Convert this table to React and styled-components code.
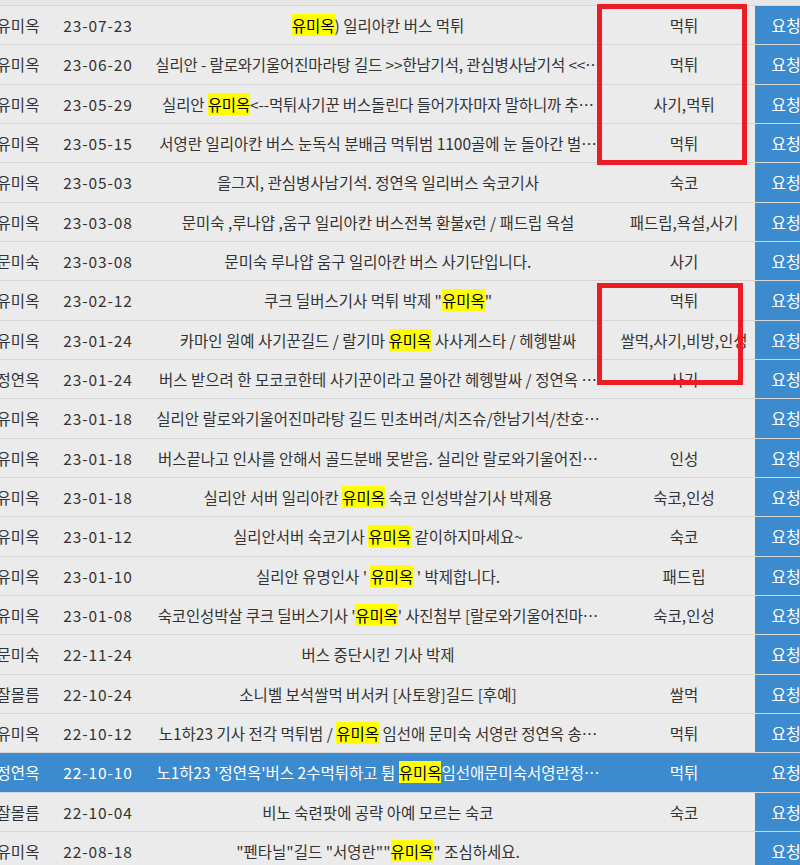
import React from 'react';
import styled, { createGlobalStyle } from 'styled-components';

const GlobalStyle = createGlobalStyle`
  html, body {
    margin: 0;
    padding: 0;
    background: #ebebeb;
    overflow: hidden;
  }
  body {
    font-family: "Noto Sans CJK KR", "Noto Sans", sans-serif;
  }
`;

const Page = styled.div`
  position: relative;
  width: 800px;
  height: 865px;
  overflow: hidden;
  background: #ebebeb;
`;

const Table = styled.div`
  display: flex;
  flex-direction: column;
  margin-left: -12px;
  padding-top: 5px;
  background: #e7e7e7;
`;

const Row = styled.div`
  display: grid;
  grid-template-columns: 60px 100px 460px 147px 60px;
  height: 38.33px;
  border-top: 1px solid #d7d7d7;
  background: ${(p) => (p.selected ? '#3d8bcf' : '#ebebeb')};
  color: ${(p) => (p.selected ? '#ffffff' : '#333333')};
  font-size: 15.5px;
`;

const Cell = styled.div`
  display: flex;
  align-items: center;
  justify-content: center;
  white-space: nowrap;
  overflow: hidden;
  letter-spacing: ${(p) => (p.wide ? '0.9px' : '0')};
`;

const TitleCell = styled.div`
  padding: 0 7px;
  line-height: 38.33px;
  text-align: center;
  white-space: nowrap;
  overflow: hidden;
  text-overflow: ellipsis;
  letter-spacing: ${(p) => (p.tight ? '-0.15px' : '0')};
`;

const TagCell = styled.div`
  padding-left: 5px;
  line-height: 38.33px;
  text-align: center;
  white-space: nowrap;
`;

const ReqButton = styled.div`
  display: flex;
  align-items: center;
  justify-content: center;
  padding-left: 2px;
  background: #3d8bcf;
  color: #ffffff;
  font-size: 16px;
  cursor: pointer;
`;

const Mark = styled.span`
  background: #ffff00;
  color: #000000;
`;

const RedBox = styled.div`
  position: absolute;
  left: ${(p) => p.x}px;
  top: ${(p) => p.y}px;
  width: ${(p) => p.w}px;
  height: ${(p) => p.h}px;
  box-sizing: border-box;
  border: 5px solid #ed1c24;
  pointer-events: none;
`;

const M = '유미옥';

// titles that the board cuts off are kept as the board shows them
const rows = [
  { name: '유미옥', date: '23-07-23', title: [[M], ') 일리아칸 버스 먹튀'], tag: '먹튀' },
  { name: '유미옥', date: '23-06-20', title: ['실리안 - 랄로와기울어진마라탕 길드 >>한남기석, 관심병사남기석 <<…'], tag: '먹튀', tight: true },
  { name: '유미옥', date: '23-05-29', title: ['실리안 ', [M], '<--먹튀사기꾼 버스돌린다 들어가자마자 말하니까 추…'], tag: '사기,먹튀', tight: true },
  { name: '유미옥', date: '23-05-15', title: ['서영란 일리아칸 버스 눈독식 분배금 먹튀범 1100골에 눈 돌아간 벌…'], tag: '먹튀' },
  { name: '유미옥', date: '23-05-03', title: ['을그지, 관심병사남기석. 정연옥 일리버스 숙코기사'], tag: '숙코' },
  { name: '유미옥', date: '23-03-08', title: ['문미숙 ,루나얍 ,움구 일리아칸 버스전복 환불x런 / 패드립 욕설'], tag: '패드립,욕설,사기' },
  { name: '문미숙', date: '23-03-08', title: ['문미숙 루나얍 움구 일리아칸 버스 사기단입니다.'], tag: '사기' },
  { name: '유미옥', date: '23-02-12', title: ['쿠크 딜버스기사 먹튀 박제 "', [M], '"'], tag: '먹튀' },
  { name: '유미옥', date: '23-01-24', title: ['카마인 원예 사기꾼길드 / 랄기마 ', [M], ' 사사게스타 / 헤헹발싸'], tag: '쌀먹,사기,비방,인성' },
  { name: '정연옥', date: '23-01-24', title: ['버스 받으려 한 모코코한테 사기꾼이라고 몰아간 헤헹발싸 / 정연옥 …'], tag: '사기' },
  { name: '유미옥', date: '23-01-18', title: ['실리안 랄로와기울어진마라탕 길드 민초버려/치즈슈/한남기석/찬호…'], tag: '' },
  { name: '유미옥', date: '23-01-18', title: ['버스끝나고 인사를 안해서 골드분배 못받음. 실리안 랄로와기울어진…'], tag: '인성' },
  { name: '유미옥', date: '23-01-18', title: ['실리안 서버 일리아칸 ', [M], ' 숙코 인성박살기사 박제용'], tag: '숙코,인성' },
  { name: '유미옥', date: '23-01-12', title: ['실리안서버 숙코기사 ', [M], ' 같이하지마세요~'], tag: '숙코' },
  { name: '유미옥', date: '23-01-10', title: ['실리안 유명인사 \' ', [M], ' \' 박제합니다.'], tag: '패드립' },
  { name: '유미옥', date: '23-01-08', title: ['숙코인성박살 쿠크 딜버스기사 \'', [M], '\' 사진첨부 [랄로와기울어진마…'], tag: '숙코,인성', tight: true },
  { name: '문미숙', date: '22-11-24', title: ['버스 중단시킨 기사 박제'], tag: '' },
  { name: '잘몰름', date: '22-10-24', title: ['소니벨 보석쌀먹 버서커 [사토왕]길드 [후예]'], tag: '쌀먹' },
  { name: '유미옥', date: '22-10-12', title: ['노1하23 기사 전각 먹튀범 / ', [M], ' 임선애 문미숙 서영란 정연옥 송…'], tag: '먹튀' },
  { name: '정연옥', date: '22-10-10', title: ['노1하23 \'정연옥\'버스 2수먹튀하고 튐 ', [M], '임선애문미숙서영란정…'], tag: '먹튀', selected: true },
  { name: '잘몰름', date: '22-10-04', title: ['비노 숙련팟에 공략 아예 모르는 숙코'], tag: '숙코' },
  { name: '유미옥', date: '22-08-18', title: ['"펜타닐"길드 "서영란""', [M], '" 조심하세요.'], tag: '' },
];

function renderTitle(parts) {
  return parts.map((p, i) =>
    Array.isArray(p) ? <Mark key={i}>{p[0]}</Mark> : <React.Fragment key={i}>{p}</React.Fragment>
  );
}

export default function App() {
  return (
    <Page>
      <GlobalStyle />
      <Table>
        {rows.map((r, i) => (
          <Row key={i} selected={r.selected}>
            <Cell>{r.name}</Cell>
            <Cell wide>{r.date}</Cell>
            <TitleCell tight={r.tight}>{renderTitle(r.title)}</TitleCell>
            <TagCell>{r.tag}</TagCell>
            <ReqButton>요청</ReqButton>
          </Row>
        ))}
      </Table>
      <RedBox x={597} y={4} w={150} h={161} />
      <RedBox x={597} y={283} w={146} h={102} />
    </Page>
  );
}
